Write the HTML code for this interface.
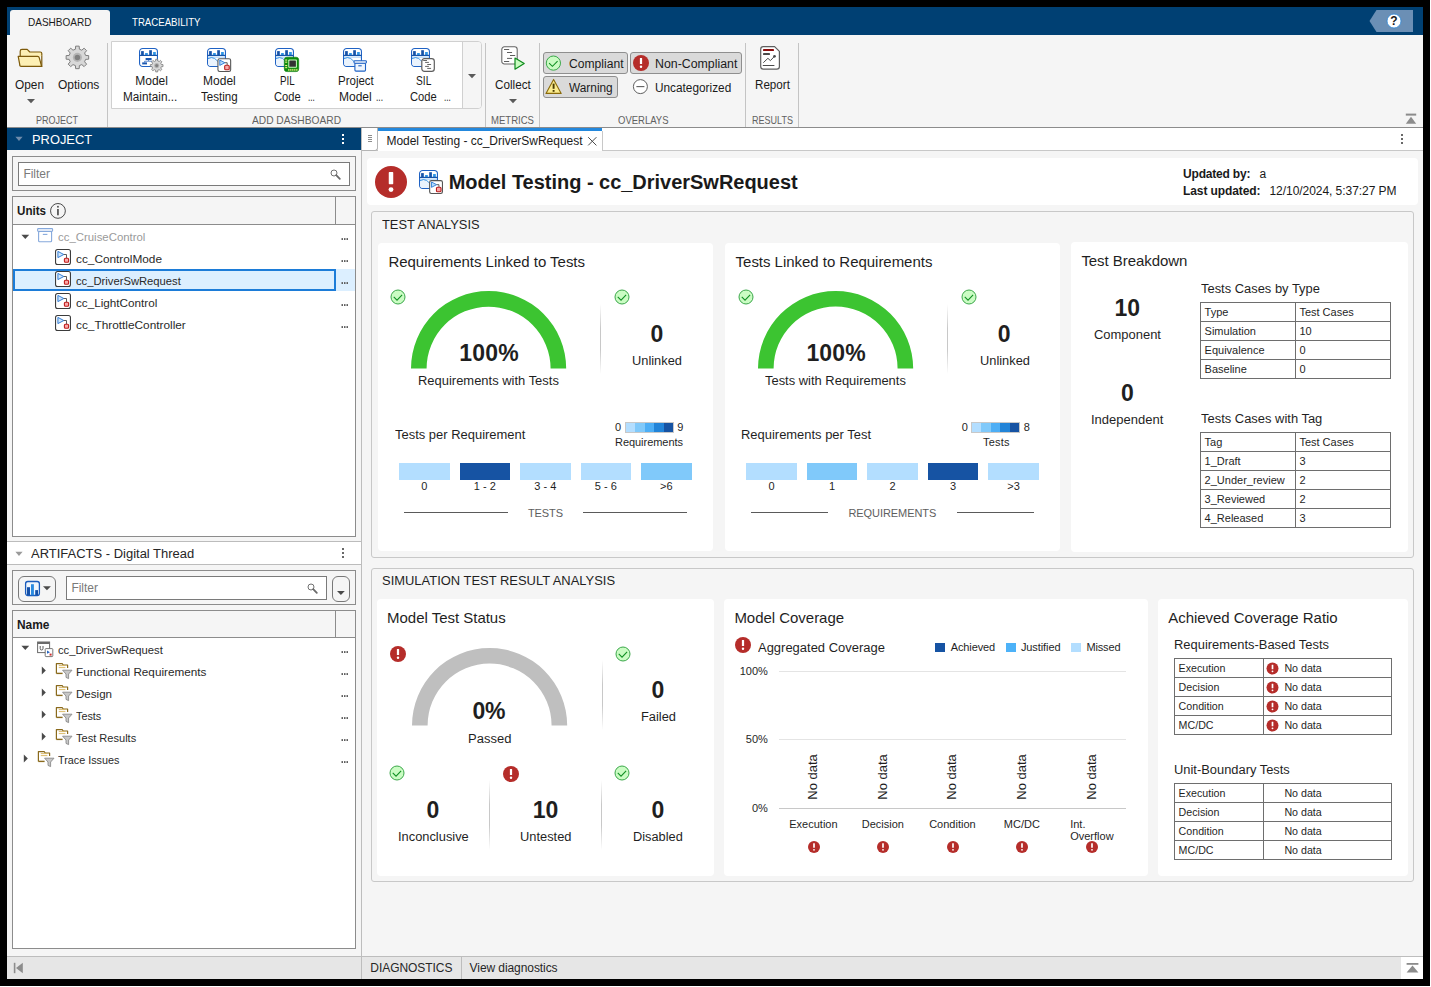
<!DOCTYPE html>
<html><head><meta charset="utf-8"><title>Model Testing Dashboard</title>
<style>
html,body{margin:0;padding:0;background:#fff;}
body{width:1431px;height:987px;position:relative;overflow:hidden;font-family:"Liberation Sans",sans-serif;}
#r div,#r svg{position:absolute;}
#r{position:absolute;left:0;top:0;width:1431px;height:987px;}
</style></head><body><div id="r">
<div style="left:0px;top:0px;width:1430px;height:986px;background:#000;"></div>
<div style="left:7px;top:7px;width:1416px;height:972px;background:#f5f5f5;"></div>
<div style="left:7px;top:7px;width:1416px;height:28px;background:#004073;"></div>
<div style="left:10px;top:10px;width:100px;height:26px;background:#f5f5f5;border-radius:3px 3px 0 0;"></div>
<div style="left:28.00px;top:14.00px;height:16px;line-height:16px;font-size:11px;color:#1a1a1a;white-space:nowrap;width:69.68px;transform:scaleX(0.9113);transform-origin:0 50%;">DASHBOARD</div>
<div style="left:132.00px;top:14.00px;height:16px;line-height:16px;font-size:11px;color:#fff;white-space:nowrap;width:78.24px;transform:scaleX(0.8755);transform-origin:0 50%;">TRACEABILITY</div>
<svg style="left:1368px;top:9px;" width="48" height="24" viewBox="0 0 48 24"><path d="M1.5 12 L8.5 1 H45 V23 H8.5 Z" fill="#6b8fb5"/><circle cx="26" cy="12" r="7" fill="#fff" stroke="#2a86d8" stroke-width="0.8"/></svg>
<div style="left:1390.33px;top:12.30px;height:18px;line-height:18px;font-size:12px;color:#1a1a1a;white-space:nowrap;font-weight:bold;">?</div>
<div style="left:7px;top:127px;width:1416px;height:1px;background:#8c8c8c;"></div>
<div style="left:107px;top:43px;width:1px;height:84px;background:#c4c4c4;"></div>
<div style="left:485px;top:43px;width:1px;height:84px;background:#c4c4c4;"></div>
<div style="left:539px;top:43px;width:1px;height:84px;background:#c4c4c4;"></div>
<div style="left:745px;top:43px;width:1px;height:84px;background:#c4c4c4;"></div>
<div style="left:798px;top:43px;width:1px;height:84px;background:#c4c4c4;"></div>
<div style="left:36.00px;top:112.00px;height:16px;line-height:16px;font-size:10.5px;color:#616161;white-space:nowrap;width:49.00px;transform:scaleX(0.8571);transform-origin:0 50%;">PROJECT</div>
<div style="left:252.00px;top:112.00px;height:16px;line-height:16px;font-size:10.5px;color:#616161;white-space:nowrap;width:91.60px;transform:scaleX(0.9716);transform-origin:0 50%;">ADD DASHBOARD</div>
<div style="left:491.00px;top:112.00px;height:16px;line-height:16px;font-size:10.5px;color:#616161;white-space:nowrap;width:47.25px;transform:scaleX(0.9100);transform-origin:0 50%;">METRICS</div>
<div style="left:617.50px;top:112.00px;height:16px;line-height:16px;font-size:10.5px;color:#616161;white-space:nowrap;width:55.83px;transform:scaleX(0.9046);transform-origin:0 50%;">OVERLAYS</div>
<div style="left:751.50px;top:112.00px;height:16px;line-height:16px;font-size:10.5px;color:#616161;white-space:nowrap;width:47.65px;transform:scaleX(0.8604);transform-origin:0 50%;">RESULTS</div>
<svg style="left:1405px;top:113px;" width="12" height="12" viewBox="0 0 12 12"><rect x="0.8" y="0.6" width="10.4" height="2" fill="#8c8c8c"/><path d="M6 3.8 L11.2 10.8 H0.8 Z" fill="#8c8c8c"/></svg>
<svg style="left:17px;top:47px;" width="27" height="21" viewBox="0 0 27 21"><path d="M3.2 19.2 V4.2 Q3.2 2.4 5 2.4 H10.2 L12.8 5 H23.2 Q24.8 5 24.8 6.6 V8.6" fill="#fdf0b4" stroke="#7d5a0a" stroke-width="1.2" stroke-linejoin="round"/>
<path d="M1.2 9.4 H20.6 Q22 9.4 22.3 10.8 L24.6 19.4 H4 Q3.1 19.4 2.9 18.4 Z" fill="#fdf0b4" stroke="#7d5a0a" stroke-width="1.2" stroke-linejoin="round"/>
<path d="M24.8 8.6 V19.4 H24.6" fill="none" stroke="#7d5a0a" stroke-width="1.2"/></svg>
<div style="left:15.00px;top:75.70px;height:18px;line-height:18px;font-size:12px;color:#1a1a1a;white-space:nowrap;width:29.36px;transform:scaleX(0.9879);transform-origin:0 50%;">Open</div>
<svg style="left:26px;top:98px;" width="10" height="6" viewBox="0 0 10 6"><path d="M1 1 H9 L5 5.2 Z" fill="#5a5a5a"/></svg>
<svg style="left:64px;top:45px;" width="27" height="26" viewBox="0 0 27 26"><path d="M11.62 1.14 L15.18 1.14 L15.37 4.20 L17.81 5.21 L20.10 3.18 L22.62 5.70 L20.59 7.99 L21.60 10.43 L24.66 10.62 L24.66 14.18 L21.60 14.37 L20.59 16.81 L22.62 19.10 L20.10 21.62 L17.81 19.59 L15.37 20.60 L15.18 23.66 L11.62 23.66 L11.43 20.60 L8.99 19.59 L6.70 21.62 L4.18 19.10 L6.21 16.81 L5.20 14.37 L2.14 14.18 L2.14 10.62 L5.20 10.43 L6.21 7.99 L4.18 5.70 L6.70 3.18 L8.99 5.21 L11.43 4.20 Z" fill="#d8d8d8" stroke="#7e7e7e" stroke-width="1.0" stroke-linejoin="round"/><circle cx="13.4" cy="12.4" r="4.56" fill="#b4b4b4"/><circle cx="13.4" cy="12.4" r="2.74" fill="#808080"/></svg>
<div style="left:57.70px;top:75.70px;height:18px;line-height:18px;font-size:12px;color:#1a1a1a;white-space:nowrap;width:41.36px;transform:scaleX(0.9987);transform-origin:0 50%;">Options</div>
<div style="left:111px;top:41px;width:371px;height:68px;background:#fff;border:1px solid #d0d0d0;border-radius:0 4px 4px 0;box-sizing:border-box;"></div>
<div style="left:462px;top:42px;width:1px;height:66px;background:#d0d0d0;"></div>
<div style="left:463px;top:42px;width:18px;height:66px;background:#f5f5f5;border-radius:0 3px 3px 0;"></div>
<svg style="left:467px;top:73px;" width="10" height="6" viewBox="0 0 10 6"><path d="M1 1 H9 L5 5.2 Z" fill="#5a5a5a"/></svg>
<svg style="left:138px;top:47px;" width="27" height="27" viewBox="-1 -1 27 27"><rect x="0.55" y="0.55" width="17.9" height="17.9" rx="3.2" fill="#fff" stroke="#1f62c4" stroke-width="1.1"/>
<rect x="2.1" y="3.1" width="2.7" height="4.2" fill="#1653a8"/><rect x="6.1" y="5" width="2.7" height="2.3" fill="#2f96e6"/><rect x="10.2" y="2.2" width="2.7" height="5.1" fill="#1653a8"/><rect x="14.1" y="4" width="2.7" height="3.3" fill="#2f96e6"/>
<path d="M0.6 7.4 H18.4" stroke="#1653a8" stroke-width="1.2"/><rect x="6.6" y="10" width="6" height="2" fill="#1b57b0"/><rect x="3.2" y="14.4" width="4.8" height="2" fill="#1b57b0"/><path d="M9.6 12 V13.2 H5.6 V14.4 M9.6 13.2 H13 V14.4" fill="none" stroke="#2866c0" stroke-width="0.8"/><path d="M16.70 11.28 L18.70 11.28 L18.81 12.99 L20.17 13.56 L21.46 12.42 L22.88 13.84 L21.74 15.13 L22.31 16.49 L24.02 16.60 L24.02 18.60 L22.31 18.71 L21.74 20.07 L22.88 21.36 L21.46 22.78 L20.17 21.64 L18.81 22.21 L18.70 23.92 L16.70 23.92 L16.59 22.21 L15.23 21.64 L13.94 22.78 L12.52 21.36 L13.66 20.07 L13.09 18.71 L11.38 18.60 L11.38 16.60 L13.09 16.49 L13.66 15.13 L12.52 13.84 L13.94 12.42 L15.23 13.56 L16.59 12.99 Z" fill="#d8d8d8" stroke="#7e7e7e" stroke-width="0.8" stroke-linejoin="round"/><circle cx="17.7" cy="17.6" r="2.56" fill="#b4b4b4"/><circle cx="17.7" cy="17.6" r="1.54" fill="#808080"/></svg>
<div style="left:135.26px;top:72.00px;height:18px;line-height:18px;font-size:12px;color:#1a1a1a;white-space:nowrap;">Model</div>
<div style="left:123.00px;top:88.00px;height:18px;line-height:18px;font-size:12px;color:#1a1a1a;white-space:nowrap;width:55.36px;transform:scaleX(0.9809);transform-origin:0 50%;">Maintain...</div>
<svg style="left:206px;top:47px;" width="28" height="27" viewBox="-1 -1 28 27"><rect x="0.55" y="0.55" width="17.9" height="17.9" rx="3.2" fill="#fff" stroke="#1f62c4" stroke-width="1.1"/><path d="M1.1 10.6 Q4.6 8.6 7.8 10.6 L13 15.2 V17.9 H3.8 Q1.1 17.9 1.1 15.2 Z" fill="#eaf3fd"/><path d="M0.8 9.1 H18.2" stroke="#5aa2ea" stroke-width="0.6"/><path d="M1 10.7 Q4.6 8.5 7.7 10.5 L12.6 14.9" fill="none" stroke="#2f8fe2" stroke-width="0.9"/>
<rect x="2.1" y="3.1" width="2.7" height="4.2" fill="#1653a8"/><rect x="6.1" y="5" width="2.7" height="2.3" fill="#2f96e6"/><rect x="10.2" y="2.2" width="2.7" height="5.1" fill="#1653a8"/><rect x="14.1" y="4" width="2.7" height="3.3" fill="#2f96e6"/>
<path d="M0.6 7.4 H18.4" stroke="#1653a8" stroke-width="1.2"/><g transform="translate(10.4,10.2) scale(0.9857142857142858)"><rect x="0.55" y="0.55" width="12.9" height="12.9" rx="1.7" fill="#fff" stroke="#555" stroke-width="1.1"/>
<path d="M2.4 1.9 L7.6 4.6 L2.4 7.3 Z" fill="#b4dafa" stroke="#2a78d4" stroke-width="0.9" stroke-linejoin="round"/>
<path d="M7.6 4.6 H9.9 V7" fill="none" stroke="#4a4a4a" stroke-width="0.9"/>
<rect x="7.4" y="7.2" width="4.6" height="4.6" rx="1.1" fill="#f8a8a8" stroke="#b81c1c" stroke-width="1.1"/></g></svg>
<div style="left:203.06px;top:72.00px;height:18px;line-height:18px;font-size:12px;color:#1a1a1a;white-space:nowrap;">Model</div>
<div style="left:200.80px;top:88.00px;height:18px;line-height:18px;font-size:12px;color:#1a1a1a;white-space:nowrap;width:38.02px;transform:scaleX(0.9626);transform-origin:0 50%;">Testing</div>
<svg style="left:274px;top:47px;" width="28" height="27" viewBox="-1 -1 28 27"><rect x="0.55" y="0.55" width="17.9" height="17.9" rx="3.2" fill="#fff" stroke="#1f62c4" stroke-width="1.1"/><path d="M1.1 10.6 Q4.6 8.6 7.8 10.6 L13 15.2 V17.9 H3.8 Q1.1 17.9 1.1 15.2 Z" fill="#eaf3fd"/><path d="M0.8 9.1 H18.2" stroke="#5aa2ea" stroke-width="0.6"/><path d="M1 10.7 Q4.6 8.5 7.7 10.5 L12.6 14.9" fill="none" stroke="#2f8fe2" stroke-width="0.9"/>
<rect x="2.1" y="3.1" width="2.7" height="4.2" fill="#1653a8"/><rect x="6.1" y="5" width="2.7" height="2.3" fill="#2f96e6"/><rect x="10.2" y="2.2" width="2.7" height="5.1" fill="#1653a8"/><rect x="14.1" y="4" width="2.7" height="3.3" fill="#2f96e6"/>
<path d="M0.6 7.4 H18.4" stroke="#1653a8" stroke-width="1.2"/><g transform="translate(9,8.9)"><rect x="0.3" y="0.3" width="14.4" height="14.4" rx="2.6" fill="#0c8c0c" stroke="#0a7a0a" stroke-width="0.6"/><rect x="4.3" y="2.6" width="8.6" height="8.3" rx="0.8" fill="#c8fcc0"/><rect x="5.3" y="3.6" width="6.6" height="6.3" rx="0.4" fill="#333"/>
<g fill="#f4f08a"><rect x="1.2" y="2.6" width="2" height="1.1"/><rect x="1.2" y="4.7" width="2" height="1.1"/><rect x="1.2" y="8.1" width="2" height="1.1"/><rect x="1.2" y="10.2" width="2" height="1.1"/>
<rect x="4.3" y="12" width="1.1" height="1.9"/><rect x="6.3" y="12" width="1.1" height="1.9"/><rect x="8.3" y="12" width="1.1" height="1.9"/><rect x="10.3" y="12" width="1.1" height="1.9"/><rect x="12.3" y="12" width="1.1" height="1.9"/></g></g></svg>
<div style="left:280.00px;top:72.00px;height:18px;line-height:18px;font-size:12px;color:#1a1a1a;white-space:nowrap;width:18.01px;transform:scaleX(0.8161);transform-origin:0 50%;">PIL</div>
<div style="left:273.70px;top:88.00px;height:18px;line-height:18px;font-size:12px;color:#1a1a1a;white-space:nowrap;width:28.69px;transform:scaleX(0.9272);transform-origin:0 50%;">Code</div>
<div style="left:308.00px;top:88.00px;height:18px;line-height:18px;font-size:12px;color:#1a1a1a;white-space:nowrap;width:10.00px;transform:scaleX(0.6799);transform-origin:0 50%;">...</div>
<svg style="left:342px;top:47px;" width="28" height="27" viewBox="-1 -1 28 27"><rect x="0.55" y="0.55" width="17.9" height="17.9" rx="3.2" fill="#fff" stroke="#1f62c4" stroke-width="1.1"/><path d="M1.1 10.6 Q4.6 8.6 7.8 10.6 L13 15.2 V17.9 H3.8 Q1.1 17.9 1.1 15.2 Z" fill="#eaf3fd"/><path d="M0.8 9.1 H18.2" stroke="#5aa2ea" stroke-width="0.6"/><path d="M1 10.7 Q4.6 8.5 7.7 10.5 L12.6 14.9" fill="none" stroke="#2f8fe2" stroke-width="0.9"/>
<rect x="2.1" y="3.1" width="2.7" height="4.2" fill="#1653a8"/><rect x="6.1" y="5" width="2.7" height="2.3" fill="#2f96e6"/><rect x="10.2" y="2.2" width="2.7" height="5.1" fill="#1653a8"/><rect x="14.1" y="4" width="2.7" height="3.3" fill="#2f96e6"/>
<path d="M0.6 7.4 H18.4" stroke="#1653a8" stroke-width="1.2"/><g transform="translate(10.5,12.2)"><rect x="1.4" y="2.8" width="10.6" height="8.1" rx="1" fill="#f0f6fd" stroke="#1f62c4" stroke-width="1.1"/><rect x="0.5" y="0.5" width="12.4" height="2.5" rx="0.9" fill="#f0f6fd" stroke="#1f62c4" stroke-width="1.1"/><path d="M4.8 5.6 H8.2" stroke="#1f62c4" stroke-width="1.1"/></g></svg>
<div style="left:337.70px;top:72.00px;height:18px;line-height:18px;font-size:12px;color:#1a1a1a;white-space:nowrap;width:37.35px;transform:scaleX(0.9586);transform-origin:0 50%;">Project</div>
<div style="left:338.80px;top:88.00px;height:18px;line-height:18px;font-size:12px;color:#1a1a1a;white-space:nowrap;width:32.68px;transform:scaleX(1.0005);transform-origin:0 50%;">Model</div>
<div style="left:376.00px;top:88.00px;height:18px;line-height:18px;font-size:12px;color:#1a1a1a;white-space:nowrap;width:10.00px;transform:scaleX(0.6999);transform-origin:0 50%;">...</div>
<svg style="left:410px;top:47px;" width="28" height="27" viewBox="-1 -1 28 27"><rect x="0.55" y="0.55" width="17.9" height="17.9" rx="3.2" fill="#fff" stroke="#1f62c4" stroke-width="1.1"/><path d="M1.1 10.6 Q4.6 8.6 7.8 10.6 L13 15.2 V17.9 H3.8 Q1.1 17.9 1.1 15.2 Z" fill="#eaf3fd"/><path d="M0.8 9.1 H18.2" stroke="#5aa2ea" stroke-width="0.6"/><path d="M1 10.7 Q4.6 8.5 7.7 10.5 L12.6 14.9" fill="none" stroke="#2f8fe2" stroke-width="0.9"/>
<rect x="2.1" y="3.1" width="2.7" height="4.2" fill="#1653a8"/><rect x="6.1" y="5" width="2.7" height="2.3" fill="#2f96e6"/><rect x="10.2" y="2.2" width="2.7" height="5.1" fill="#1653a8"/><rect x="14.1" y="4" width="2.7" height="3.3" fill="#2f96e6"/>
<path d="M0.6 7.4 H18.4" stroke="#1653a8" stroke-width="1.2"/><g transform="translate(10.2,10)"><rect x="0.6" y="0.6" width="12.5" height="12.8" rx="2.6" fill="#fff" stroke="#5e5e5e" stroke-width="1.2"/><path d="M2.4 2.5 H5.4 M4.3 4.4 H7.3 M6.4 6.5 H9.5 M4.3 8.4 H7.3 M6.4 10.4 H9.5" stroke="#5e5e5e" stroke-width="0.95" stroke-linecap="round"/></g></svg>
<div style="left:415.70px;top:72.00px;height:18px;line-height:18px;font-size:12px;color:#1a1a1a;white-space:nowrap;width:18.01px;transform:scaleX(0.8494);transform-origin:0 50%;">SIL</div>
<div style="left:409.70px;top:88.00px;height:18px;line-height:18px;font-size:12px;color:#1a1a1a;white-space:nowrap;width:28.69px;transform:scaleX(0.9307);transform-origin:0 50%;">Code</div>
<div style="left:444.20px;top:88.00px;height:18px;line-height:18px;font-size:12px;color:#1a1a1a;white-space:nowrap;width:10.00px;transform:scaleX(0.6799);transform-origin:0 50%;">...</div>
<svg style="left:500px;top:45px;" width="26" height="26" viewBox="0 0 26 26"><rect x="1.8" y="1.8" width="15.4" height="17.2" rx="2.6" fill="#fff" stroke="#646464" stroke-width="1.05"/><path d="M4.4 4.5 H8.8 M7.4 7.5 H11.7 M10.4 10.5 H14.8 M7.4 13.4 H11.7 M4.4 16.5 H8.8" stroke="#5e5e5e" stroke-width="1" stroke-linecap="round"/>
<path d="M15 13 L24.2 18.5 L15 24.2 Z" fill="#c8fcc0" stroke="#0d8a1c" stroke-width="1.2" stroke-linejoin="round"/></svg>
<div style="left:494.60px;top:75.70px;height:18px;line-height:18px;font-size:12px;color:#1a1a1a;white-space:nowrap;width:36.68px;transform:scaleX(0.9760);transform-origin:0 50%;">Collect</div>
<svg style="left:508px;top:98px;" width="10" height="6" viewBox="0 0 10 6"><path d="M1 1 H9 L5 5.2 Z" fill="#5a5a5a"/></svg>
<div style="left:543px;top:52px;width:85px;height:22px;background:#dadada;border:1px solid #8f8f8f;border-radius:3px;box-sizing:border-box;"></div>
<div style="left:630px;top:52px;width:112px;height:22px;background:#dadada;border:1px solid #8f8f8f;border-radius:3px;box-sizing:border-box;"></div>
<div style="left:543px;top:76px;width:75px;height:22px;background:#dadada;border:1px solid #8f8f8f;border-radius:3px;box-sizing:border-box;"></div>
<svg style="left:545px;top:55px;" width="17" height="17" viewBox="0 0 17 17"><circle cx="8.4" cy="8.1" r="7.1" fill="#cafcc3" stroke="#3ba84a" stroke-width="1"/><path d="M4.07 8.02 L7.41 11.37 L12.58 6.05" fill="none" stroke="#0f8f22" stroke-width="1.05"/></svg>
<div style="left:568.60px;top:54.50px;height:18px;line-height:18px;font-size:12px;color:#1a1a1a;white-space:nowrap;width:54.02px;transform:scaleX(1.0088);transform-origin:0 50%;">Compliant</div>
<svg style="left:632px;top:54px;" width="18" height="18" viewBox="0 0 18 18"><circle cx="9" cy="9" r="8" fill="#b52d2a"/><rect x="7.88" y="4.00" width="2.24" height="6.12" rx="0.32" fill="#fff"/><circle cx="9" cy="12.80" r="1.22" fill="#fff"/></svg>
<div style="left:655.40px;top:54.50px;height:18px;line-height:18px;font-size:12px;color:#1a1a1a;white-space:nowrap;width:80.03px;transform:scaleX(1.0296);transform-origin:0 50%;">Non-Compliant</div>
<svg style="left:545px;top:78px;" width="18" height="17" viewBox="0 0 18 17"><path d="M8.6 1.4 L16.2 15.4 H1 Z" fill="#fbec8e" stroke="#8a6a0a" stroke-width="1.1" stroke-linejoin="round"/><rect x="7.65" y="5.6" width="1.9" height="5.2" fill="#4a3a00"/><rect x="7.65" y="12" width="1.9" height="1.8" fill="#4a3a00"/></svg>
<div style="left:569.00px;top:79.20px;height:18px;line-height:18px;font-size:12px;color:#1a1a1a;white-space:nowrap;width:44.24px;transform:scaleX(0.9878);transform-origin:0 50%;">Warning</div>
<svg style="left:632px;top:78px;" width="17" height="17" viewBox="0 0 17 17"><circle cx="8.4" cy="8.6" r="7" fill="#fff" stroke="#5e5e5e" stroke-width="1"/><path d="M4.4 8.6 H12.4" stroke="#5e5e5e" stroke-width="1.1"/></svg>
<div style="left:655.40px;top:79.20px;height:18px;line-height:18px;font-size:12px;color:#1a1a1a;white-space:nowrap;width:77.38px;transform:scaleX(0.9848);transform-origin:0 50%;">Uncategorized</div>
<svg style="left:759px;top:45px;" width="24" height="26" viewBox="0 0 24 26"><path d="M1.7 4.2 Q1.7 1.6 4.3 1.6 H15.6 L20.4 6.4 V21.6 Q20.4 24.2 17.8 24.2 H4.3 Q1.7 24.2 1.7 21.6 Z" fill="#fff" stroke="#5e5e5e" stroke-width="1.2" stroke-linejoin="round"/>
<rect x="4" y="4" width="11" height="2" rx="0.4" fill="#8a0c0c"/><rect x="4" y="8.1" width="7" height="1.9" rx="0.4" fill="#4a4a4a"/><path d="M4.2 20.5 H15" stroke="#4a4a4a" stroke-width="1" stroke-linecap="round"/>
<path d="M4.3 17.7 L8.9 13.3 L11.4 15.6 L15.4 11.4" fill="none" stroke="#4a4a4a" stroke-width="1"/><circle cx="15.5" cy="11.3" r="1.35" fill="#4a4a4a"/></svg>
<div style="left:754.80px;top:75.70px;height:18px;line-height:18px;font-size:12px;color:#1a1a1a;white-space:nowrap;width:36.02px;transform:scaleX(0.9690);transform-origin:0 50%;">Report</div>
<div style="left:7px;top:128px;width:354px;height:829px;background:#f5f5f5;"></div>
<div style="left:361px;top:128px;width:1px;height:851px;background:#bdbdbd;"></div>
<div style="left:7px;top:128px;width:354px;height:22px;background:#004073;"></div>
<svg style="left:15px;top:136px;" width="8" height="6" viewBox="0 0 8 6"><path d="M0.4 0.8 H7.6 L4 5 Z" fill="#6f8cab"/></svg>
<div style="left:31.50px;top:129.50px;height:20px;line-height:20px;font-size:13.6px;color:#fff;white-space:nowrap;width:63.47px;transform:scaleX(0.9469);transform-origin:0 50%;">PROJECT</div>
<svg style="left:342px;top:134px;" width="2" height="10" viewBox="0 0 2 10"><rect x="0" y="0" width="2" height="2" fill="#fff"/><rect x="0" y="4" width="2" height="2" fill="#fff"/><rect x="0" y="8" width="2" height="2" fill="#fff"/></svg>
<div style="left:12px;top:156px;width:344px;height:35px;background:#f5f5f5;border:1px solid #8c8c8c;box-sizing:border-box;"></div>
<div style="left:18px;top:162px;width:332px;height:24px;background:#fff;border:1px solid #7a7a7a;box-sizing:border-box;"></div>
<div style="left:23.40px;top:164.80px;height:18px;line-height:18px;font-size:12px;color:#7a7a7a;white-space:nowrap;letter-spacing:-0.013px;">Filter</div>
<svg style="left:329.5px;top:168.5px;" width="11" height="11" viewBox="0 0 11 11"><circle cx="4" cy="4" r="3" fill="#fff" stroke="#707070" stroke-width="1"/><path d="M6.2 6.2 L9.8 9.8" stroke="#6a6a6a" stroke-width="1.8" stroke-linecap="round"/></svg>
<div style="left:12px;top:196px;width:344px;height:341px;background:#fff;border:1px solid #8c8c8c;box-sizing:border-box;"></div>
<div style="left:13px;top:197px;width:342px;height:27px;background:#f5f5f5;"></div>
<div style="left:13px;top:224px;width:342px;height:1px;background:#8c8c8c;"></div>
<div style="left:335px;top:197px;width:1px;height:27px;background:#8c8c8c;"></div>
<div style="left:16.50px;top:201.80px;height:18px;line-height:18px;font-size:12px;color:#1a1a1a;white-space:nowrap;font-weight:bold;width:30.00px;transform:scaleX(0.9667);transform-origin:0 50%;">Units</div>
<svg style="left:49px;top:202px;" width="18" height="18" viewBox="0 0 18 18"><circle cx="8.95" cy="8.9" r="7.4" fill="none" stroke="#4a4a4a" stroke-width="1"/><rect x="8.2" y="7" width="1.5" height="6.3" fill="#3a3a3a"/><rect x="8.2" y="3.9" width="1.5" height="1.7" fill="#3a3a3a"/></svg>
<div style="left:336px;top:269px;width:19px;height:22px;background:#dcefff;"></div>
<div style="left:13px;top:269px;width:323px;height:22px;background:#dcefff;border:2px solid #1c7cd8;box-sizing:border-box;"></div>
<svg style="left:21px;top:233.6px;" width="9" height="6" viewBox="0 0 9 6"><path d="M0.4 0.8 H8.2 L4.3 5 Z" fill="#4a4a4a"/></svg>
<svg style="left:36.5px;top:228px;" width="17" height="15" viewBox="0 0 17 15"><rect x="1.6" y="3.4" width="13" height="10.4" rx="1" fill="#fff" stroke="#86a9dc" stroke-width="1.1"/><rect x="0.6" y="0.6" width="15" height="2.8" rx="0.8" fill="#fff" stroke="#86a9dc" stroke-width="1.1"/><path d="M5.8 6.4 H10.4" stroke="#86a9dc" stroke-width="1.1"/></svg>
<div style="left:58.40px;top:228.80px;height:17px;line-height:17px;font-size:11.5px;color:#9a9a9a;white-space:nowrap;width:88.20px;transform:scaleX(0.9909);transform-origin:0 50%;">cc_CruiseControl</div>
<svg style="left:55px;top:249.2px;" width="16" height="16" viewBox="0 0 16 16"><rect x="0.55" y="0.55" width="14.9" height="14.9" rx="2" fill="#fff" stroke="#3c3c3c" stroke-width="1.1"/>
<path d="M2.9 2.4 L8.8 5.5 L2.9 8.6 Z" fill="#cfe6fb" stroke="#2a78d4" stroke-width="0.95" stroke-linejoin="round"/>
<path d="M8.8 5.5 H11.5 V9" fill="none" stroke="#4a4a4a" stroke-width="0.9"/>
<rect x="9.4" y="9.2" width="4.2" height="4" rx="1" fill="#f8a8a8" stroke="#c01c1c" stroke-width="1.1"/></svg>
<div style="left:76.20px;top:250.80px;height:17px;line-height:17px;font-size:11.5px;color:#2a2a2a;white-space:nowrap;width:83.73px;transform:scaleX(1.0271);transform-origin:0 50%;">cc_ControlMode</div>
<svg style="left:55px;top:271.09999999999997px;" width="16" height="16" viewBox="0 0 16 16"><rect x="0.55" y="0.55" width="14.9" height="14.9" rx="2" fill="#fff" stroke="#3c3c3c" stroke-width="1.1"/>
<path d="M2.9 2.4 L8.8 5.5 L2.9 8.6 Z" fill="#cfe6fb" stroke="#2a78d4" stroke-width="0.95" stroke-linejoin="round"/>
<path d="M8.8 5.5 H11.5 V9" fill="none" stroke="#4a4a4a" stroke-width="0.9"/>
<rect x="9.4" y="9.2" width="4.2" height="4" rx="1" fill="#f8a8a8" stroke="#c01c1c" stroke-width="1.1"/></svg>
<div style="left:76.20px;top:272.70px;height:17px;line-height:17px;font-size:11.5px;color:#2a2a2a;white-space:nowrap;width:107.37px;transform:scaleX(0.9761);transform-origin:0 50%;">cc_DriverSwRequest</div>
<svg style="left:55px;top:293.2px;" width="16" height="16" viewBox="0 0 16 16"><rect x="0.55" y="0.55" width="14.9" height="14.9" rx="2" fill="#fff" stroke="#3c3c3c" stroke-width="1.1"/>
<path d="M2.9 2.4 L8.8 5.5 L2.9 8.6 Z" fill="#cfe6fb" stroke="#2a78d4" stroke-width="0.95" stroke-linejoin="round"/>
<path d="M8.8 5.5 H11.5 V9" fill="none" stroke="#4a4a4a" stroke-width="0.9"/>
<rect x="9.4" y="9.2" width="4.2" height="4" rx="1" fill="#f8a8a8" stroke="#c01c1c" stroke-width="1.1"/></svg>
<div style="left:76.20px;top:294.80px;height:17px;line-height:17px;font-size:11.5px;color:#2a2a2a;white-space:nowrap;width:79.91px;transform:scaleX(1.0175);transform-origin:0 50%;">cc_LightControl</div>
<svg style="left:55px;top:315.09999999999997px;" width="16" height="16" viewBox="0 0 16 16"><rect x="0.55" y="0.55" width="14.9" height="14.9" rx="2" fill="#fff" stroke="#3c3c3c" stroke-width="1.1"/>
<path d="M2.9 2.4 L8.8 5.5 L2.9 8.6 Z" fill="#cfe6fb" stroke="#2a78d4" stroke-width="0.95" stroke-linejoin="round"/>
<path d="M8.8 5.5 H11.5 V9" fill="none" stroke="#4a4a4a" stroke-width="0.9"/>
<rect x="9.4" y="9.2" width="4.2" height="4" rx="1" fill="#f8a8a8" stroke="#c01c1c" stroke-width="1.1"/></svg>
<div style="left:76.20px;top:316.70px;height:17px;line-height:17px;font-size:11.5px;color:#2a2a2a;white-space:nowrap;width:106.74px;transform:scaleX(1.0287);transform-origin:0 50%;">cc_ThrottleController</div>
<svg style="left:341px;top:238px;" width="8" height="3" viewBox="0 0 8 3"><rect x="0.5" y="0.1" width="1.5" height="1.9" fill="#5c5c5c"/><rect x="3" y="0.1" width="1.5" height="1.9" fill="#5c5c5c"/><rect x="5.5" y="0.1" width="1.5" height="1.9" fill="#5c5c5c"/></svg>
<svg style="left:341px;top:260px;" width="8" height="3" viewBox="0 0 8 3"><rect x="0.5" y="0.1" width="1.5" height="1.9" fill="#5c5c5c"/><rect x="3" y="0.1" width="1.5" height="1.9" fill="#5c5c5c"/><rect x="5.5" y="0.1" width="1.5" height="1.9" fill="#5c5c5c"/></svg>
<svg style="left:341px;top:282px;" width="8" height="3" viewBox="0 0 8 3"><rect x="0.5" y="0.1" width="1.5" height="1.9" fill="#5c5c5c"/><rect x="3" y="0.1" width="1.5" height="1.9" fill="#5c5c5c"/><rect x="5.5" y="0.1" width="1.5" height="1.9" fill="#5c5c5c"/></svg>
<svg style="left:341px;top:304px;" width="8" height="3" viewBox="0 0 8 3"><rect x="0.5" y="0.1" width="1.5" height="1.9" fill="#5c5c5c"/><rect x="3" y="0.1" width="1.5" height="1.9" fill="#5c5c5c"/><rect x="5.5" y="0.1" width="1.5" height="1.9" fill="#5c5c5c"/></svg>
<svg style="left:341px;top:326px;" width="8" height="3" viewBox="0 0 8 3"><rect x="0.5" y="0.1" width="1.5" height="1.9" fill="#5c5c5c"/><rect x="3" y="0.1" width="1.5" height="1.9" fill="#5c5c5c"/><rect x="5.5" y="0.1" width="1.5" height="1.9" fill="#5c5c5c"/></svg>
<div style="left:7px;top:541px;width:354px;height:24px;background:#fff;border-top:1px solid #bcbcbc;border-bottom:1px solid #bcbcbc;box-sizing:border-box;"></div>
<svg style="left:15px;top:550.5px;" width="8" height="6" viewBox="0 0 8 6"><path d="M0.4 0.8 H7.6 L4 5 Z" fill="#9a9a9a"/></svg>
<div style="left:31.00px;top:542.70px;height:21px;line-height:21px;font-size:13.7px;color:#262626;white-space:nowrap;width:172.32px;transform:scaleX(0.9482);transform-origin:0 50%;">ARTIFACTS - Digital Thread</div>
<svg style="left:342px;top:548px;" width="2" height="10" viewBox="0 0 2 10"><rect x="0" y="0" width="2" height="2" fill="#686868"/><rect x="0" y="4" width="2" height="2" fill="#686868"/><rect x="0" y="8" width="2" height="2" fill="#686868"/></svg>
<div style="left:12px;top:570px;width:344px;height:35px;background:#f5f5f5;border:1px solid #8c8c8c;box-sizing:border-box;"></div>
<div style="left:18px;top:576px;width:38px;height:26px;background:#f5f5f5;border:1px solid #787878;border-radius:6px;box-sizing:border-box;"></div>
<svg style="left:24px;top:580px;" width="17" height="17" viewBox="0 0 17 17"><rect x="1.6" y="1.5" width="13.8" height="14" rx="2.2" fill="#f0f6fd" stroke="#1a5cbc" stroke-width="1.3"/><rect x="3" y="7.2" width="3" height="8" fill="#1450a8"/><rect x="7" y="4.2" width="2.9" height="11" fill="#2a8ae0"/><rect x="11.2" y="10.1" width="2.8" height="5" fill="#1450a8"/></svg>
<svg style="left:43px;top:586px;" width="8" height="5" viewBox="0 0 8 5"><path d="M0 0.2 H7.9 L3.95 4.2 Z" fill="#4a4a4a"/></svg>
<div style="left:66px;top:576px;width:261px;height:24px;background:#fff;border:1px solid #7a7a7a;box-sizing:border-box;"></div>
<div style="left:71.40px;top:578.80px;height:18px;line-height:18px;font-size:12px;color:#7a7a7a;white-space:nowrap;letter-spacing:-0.013px;">Filter</div>
<svg style="left:306.5px;top:582.5px;" width="11" height="11" viewBox="0 0 11 11"><circle cx="4" cy="4" r="3" fill="#fff" stroke="#707070" stroke-width="1"/><path d="M6.2 6.2 L9.8 9.8" stroke="#6a6a6a" stroke-width="1.8" stroke-linecap="round"/></svg>
<div style="left:332px;top:576px;width:18px;height:26px;background:#f5f5f5;border:1px solid #787878;border-radius:6px;box-sizing:border-box;"></div>
<svg style="left:337px;top:591px;" width="8" height="5" viewBox="0 0 8 5"><path d="M0 0 H7.8 L3.9 3.9 Z" fill="#4a4a4a"/></svg>
<div style="left:12px;top:610px;width:344px;height:339px;background:#fff;border:1px solid #8c8c8c;box-sizing:border-box;"></div>
<div style="left:13px;top:611px;width:342px;height:26px;background:#f5f5f5;"></div>
<div style="left:13px;top:637px;width:342px;height:1px;background:#8c8c8c;"></div>
<div style="left:335px;top:611px;width:1px;height:26px;background:#8c8c8c;"></div>
<div style="left:16.50px;top:615.80px;height:18px;line-height:18px;font-size:12px;color:#1a1a1a;white-space:nowrap;font-weight:bold;width:32.68px;transform:scaleX(0.9944);transform-origin:0 50%;">Name</div>
<svg style="left:21.4px;top:645.4px;" width="9" height="6" viewBox="0 0 9 6"><path d="M0.4 0.8 H8.2 L4.3 5 Z" fill="#4a4a4a"/></svg>
<svg style="left:37px;top:641px;" width="17" height="17" viewBox="0 0 17 17"><rect x="0.6" y="1" width="12" height="10.6" fill="#fff" stroke="#6a6a6a" stroke-width="1"/><rect x="0.6" y="1" width="12" height="2" fill="#6a6a6a"/><path d="M3.2 5 V7.6 Q3.2 9 4.6 9 Q6 9 6 7.6 V5" fill="none" stroke="#4a4a4a" stroke-width="0.9"/>
<rect x="8.2" y="7.6" width="7.6" height="8" rx="0.8" fill="#fff" stroke="#6a6a6a" stroke-width="0.9"/><path d="M10 9.6 L13 11.2 L10 12.8 Z" fill="#2866c0"/><rect x="12.6" y="12.6" width="2" height="2" fill="#d03030"/></svg>
<div style="left:58.20px;top:641.50px;height:17px;line-height:17px;font-size:11.5px;color:#2a2a2a;white-space:nowrap;width:107.37px;transform:scaleX(0.9761);transform-origin:0 50%;">cc_DriverSwRequest</div>
<svg style="left:40.6px;top:665.9px;" width="6" height="9" viewBox="0 0 6 9"><path d="M0.8 0.4 V8.4 L4.8 4.4 Z" fill="#4a4a4a"/></svg>
<svg style="left:54.6px;top:661.8px;" width="18" height="18" viewBox="0 0 18 18"><path d="M1.4 11.4 V1.6 H7.2 L8.2 3 H12.6 V6" fill="#fff" stroke="#8a6a1c" stroke-width="1.2" stroke-linejoin="round"/><path d="M3.8 3.6 H10.4 M3.8 5.6 H10.4" stroke="#d8b45a" stroke-width="0.9"/><path d="M1.4 11.4 H7.6" stroke="#8a6a1c" stroke-width="1.4"/>
<path d="M7.6 8.2 H17 L13.6 12 V16.6 L11 15.4 V12 Z" fill="#c8c8c8" stroke="#8a8a8a" stroke-width="0.9" stroke-linejoin="round"/></svg>
<div style="left:76.30px;top:663.50px;height:17px;line-height:17px;font-size:11.5px;color:#2a2a2a;white-space:nowrap;width:127.84px;transform:scaleX(1.0200);transform-origin:0 50%;">Functional Requirements</div>
<svg style="left:40.6px;top:687.9px;" width="6" height="9" viewBox="0 0 6 9"><path d="M0.8 0.4 V8.4 L4.8 4.4 Z" fill="#4a4a4a"/></svg>
<svg style="left:54.6px;top:683.8px;" width="18" height="18" viewBox="0 0 18 18"><path d="M1.4 11.4 V1.6 H7.2 L8.2 3 H12.6 V6" fill="#fff" stroke="#8a6a1c" stroke-width="1.2" stroke-linejoin="round"/><path d="M3.8 3.6 H10.4 M3.8 5.6 H10.4" stroke="#d8b45a" stroke-width="0.9"/><path d="M1.4 11.4 H7.6" stroke="#8a6a1c" stroke-width="1.4"/>
<path d="M7.6 8.2 H17 L13.6 12 V16.6 L11 15.4 V12 Z" fill="#c8c8c8" stroke="#8a8a8a" stroke-width="0.9" stroke-linejoin="round"/></svg>
<div style="left:76.30px;top:685.50px;height:17px;line-height:17px;font-size:11.5px;color:#2a2a2a;white-space:nowrap;width:35.80px;transform:scaleX(1.0057);transform-origin:0 50%;">Design</div>
<svg style="left:40.6px;top:709.9px;" width="6" height="9" viewBox="0 0 6 9"><path d="M0.8 0.4 V8.4 L4.8 4.4 Z" fill="#4a4a4a"/></svg>
<svg style="left:54.6px;top:705.8px;" width="18" height="18" viewBox="0 0 18 18"><path d="M1.4 11.4 V1.6 H7.2 L8.2 3 H12.6 V6" fill="#fff" stroke="#8a6a1c" stroke-width="1.2" stroke-linejoin="round"/><path d="M3.8 3.6 H10.4 M3.8 5.6 H10.4" stroke="#d8b45a" stroke-width="0.9"/><path d="M1.4 11.4 H7.6" stroke="#8a6a1c" stroke-width="1.4"/>
<path d="M7.6 8.2 H17 L13.6 12 V16.6 L11 15.4 V12 Z" fill="#c8c8c8" stroke="#8a8a8a" stroke-width="0.9" stroke-linejoin="round"/></svg>
<div style="left:76.30px;top:707.50px;height:17px;line-height:17px;font-size:11.5px;color:#2a2a2a;white-space:nowrap;width:26.84px;transform:scaleX(0.9389);transform-origin:0 50%;">Tests</div>
<svg style="left:40.6px;top:731.9px;" width="6" height="9" viewBox="0 0 6 9"><path d="M0.8 0.4 V8.4 L4.8 4.4 Z" fill="#4a4a4a"/></svg>
<svg style="left:54.6px;top:727.8px;" width="18" height="18" viewBox="0 0 18 18"><path d="M1.4 11.4 V1.6 H7.2 L8.2 3 H12.6 V6" fill="#fff" stroke="#8a6a1c" stroke-width="1.2" stroke-linejoin="round"/><path d="M3.8 3.6 H10.4 M3.8 5.6 H10.4" stroke="#d8b45a" stroke-width="0.9"/><path d="M1.4 11.4 H7.6" stroke="#8a6a1c" stroke-width="1.4"/>
<path d="M7.6 8.2 H17 L13.6 12 V16.6 L11 15.4 V12 Z" fill="#c8c8c8" stroke="#8a8a8a" stroke-width="0.9" stroke-linejoin="round"/></svg>
<div style="left:76.30px;top:729.50px;height:17px;line-height:17px;font-size:11.5px;color:#2a2a2a;white-space:nowrap;width:62.63px;transform:scaleX(0.9612);transform-origin:0 50%;">Test Results</div>
<svg style="left:22.6px;top:753.9px;" width="6" height="9" viewBox="0 0 6 9"><path d="M0.8 0.4 V8.4 L4.8 4.4 Z" fill="#4a4a4a"/></svg>
<svg style="left:36.6px;top:749.8px;" width="18" height="18" viewBox="0 0 18 18"><path d="M1.4 11.4 V1.6 H7.2 L8.2 3 H12.6 V6" fill="#fff" stroke="#8a6a1c" stroke-width="1.2" stroke-linejoin="round"/><path d="M3.8 3.6 H10.4 M3.8 5.6 H10.4" stroke="#d8b45a" stroke-width="0.9"/><path d="M1.4 11.4 H7.6" stroke="#8a6a1c" stroke-width="1.4"/>
<path d="M7.6 8.2 H17 L13.6 12 V16.6 L11 15.4 V12 Z" fill="#c8c8c8" stroke="#8a8a8a" stroke-width="0.9" stroke-linejoin="round"/></svg>
<div style="left:58.40px;top:751.50px;height:17px;line-height:17px;font-size:11.5px;color:#2a2a2a;white-space:nowrap;width:65.40px;transform:scaleX(0.9388);transform-origin:0 50%;">Trace Issues</div>
<svg style="left:341px;top:651px;" width="8" height="3" viewBox="0 0 8 3"><rect x="0.5" y="0.1" width="1.5" height="1.9" fill="#5c5c5c"/><rect x="3" y="0.1" width="1.5" height="1.9" fill="#5c5c5c"/><rect x="5.5" y="0.1" width="1.5" height="1.9" fill="#5c5c5c"/></svg>
<svg style="left:341px;top:673px;" width="8" height="3" viewBox="0 0 8 3"><rect x="0.5" y="0.1" width="1.5" height="1.9" fill="#5c5c5c"/><rect x="3" y="0.1" width="1.5" height="1.9" fill="#5c5c5c"/><rect x="5.5" y="0.1" width="1.5" height="1.9" fill="#5c5c5c"/></svg>
<svg style="left:341px;top:695px;" width="8" height="3" viewBox="0 0 8 3"><rect x="0.5" y="0.1" width="1.5" height="1.9" fill="#5c5c5c"/><rect x="3" y="0.1" width="1.5" height="1.9" fill="#5c5c5c"/><rect x="5.5" y="0.1" width="1.5" height="1.9" fill="#5c5c5c"/></svg>
<svg style="left:341px;top:717px;" width="8" height="3" viewBox="0 0 8 3"><rect x="0.5" y="0.1" width="1.5" height="1.9" fill="#5c5c5c"/><rect x="3" y="0.1" width="1.5" height="1.9" fill="#5c5c5c"/><rect x="5.5" y="0.1" width="1.5" height="1.9" fill="#5c5c5c"/></svg>
<svg style="left:341px;top:739px;" width="8" height="3" viewBox="0 0 8 3"><rect x="0.5" y="0.1" width="1.5" height="1.9" fill="#5c5c5c"/><rect x="3" y="0.1" width="1.5" height="1.9" fill="#5c5c5c"/><rect x="5.5" y="0.1" width="1.5" height="1.9" fill="#5c5c5c"/></svg>
<svg style="left:341px;top:761px;" width="8" height="3" viewBox="0 0 8 3"><rect x="0.5" y="0.1" width="1.5" height="1.9" fill="#5c5c5c"/><rect x="3" y="0.1" width="1.5" height="1.9" fill="#5c5c5c"/><rect x="5.5" y="0.1" width="1.5" height="1.9" fill="#5c5c5c"/></svg>
<div style="left:7px;top:956px;width:1416px;height:1px;background:#bdbdbd;"></div>
<div style="left:7px;top:957px;width:1394px;height:22px;background:#e6e6e6;"></div>
<div style="left:1401px;top:957px;width:22px;height:22px;background:#fff;"></div>
<div style="left:361px;top:957px;width:1px;height:22px;background:#bdbdbd;"></div>
<div style="left:461px;top:957px;width:1px;height:22px;background:#bdbdbd;"></div>
<svg style="left:13px;top:962px;" width="11" height="12" viewBox="0 0 11 12"><rect x="0.8" y="0.8" width="1.6" height="10.4" fill="#8c8c8c"/><path d="M9.8 0.8 V11.2 L3 6 Z" fill="#8c8c8c"/></svg>
<div style="left:370.30px;top:959.00px;height:18px;line-height:18px;font-size:12px;color:#262626;white-space:nowrap;letter-spacing:-0.048px;">DIAGNOSTICS</div>
<div style="left:469.60px;top:959.00px;height:18px;line-height:18px;font-size:12px;color:#262626;white-space:nowrap;letter-spacing:-0.078px;">View diagnostics</div>
<svg style="left:1406px;top:962px;" width="13" height="12" viewBox="0 0 13 12"><rect x="0.6" y="1" width="11.8" height="1.8" fill="#8c8c8c"/><path d="M6.5 3.4 L12.4 10.4 H0.6 Z" fill="#8c8c8c"/></svg>
<div style="left:362px;top:128px;width:1061px;height:22px;background:#fff;"></div>
<div style="left:362px;top:150px;width:1061px;height:1px;background:#c8c8c8;"></div>
<div style="left:362px;top:128px;width:16px;height:23px;background:#fff;border-right:1px solid #b4b4b4;border-bottom:1px solid #b4b4b4;border-radius:0 0 3px 0;box-sizing:border-box;"></div>
<svg style="left:368px;top:135px;" width="4" height="7" viewBox="0 0 4 7"><path d="M0 0.5 H4 M0 2.5 H4 M0 4.5 H4 M0 6.5 H4" stroke="#8c8c8c" stroke-width="1"/></svg>
<div style="left:378px;top:128px;width:224px;height:3px;background:#2388dd;"></div>
<div style="left:378px;top:131px;width:225px;height:20px;background:#fff;border-right:1px solid #c8c8c8;box-sizing:border-box;"></div>
<div style="left:386.40px;top:132.00px;height:18px;line-height:18px;font-size:12px;color:#1a1a1a;white-space:nowrap;letter-spacing:-0.010px;">Model Testing - cc_DriverSwRequest</div>
<svg style="left:587px;top:135.5px;" width="11" height="11" viewBox="0 0 11 11"><path d="M1.2 1.2 L9.4 9.4 M9.4 1.2 L1.2 9.4" stroke="#4a4a4a" stroke-width="1"/></svg>
<svg style="left:1401px;top:134px;" width="2" height="10" viewBox="0 0 2 10"><rect x="0" y="0" width="2" height="2" fill="#686868"/><rect x="0" y="4" width="2" height="2" fill="#686868"/><rect x="0" y="8" width="2" height="2" fill="#686868"/></svg>
<div style="left:367px;top:158px;width:1051px;height:47px;background:#fff;border-radius:4px;"></div>
<svg style="left:374px;top:165px;" width="34" height="34" viewBox="0 0 34 34"><circle cx="17" cy="17" r="16" fill="#b52d2a"/><rect x="14.76" y="7.00" width="4.48" height="12.24" rx="0.64" fill="#fff"/><circle cx="17" cy="24.60" r="2.43" fill="#fff"/></svg>
<svg style="left:418px;top:169px;" width="27" height="27" viewBox="-1 -1 27 27"><rect x="0.55" y="0.55" width="17.9" height="17.9" rx="3.2" fill="#fff" stroke="#1f62c4" stroke-width="1.1"/><path d="M1.1 10.6 Q4.6 8.6 7.8 10.6 L13 15.2 V17.9 H3.8 Q1.1 17.9 1.1 15.2 Z" fill="#eaf3fd"/><path d="M0.8 9.1 H18.2" stroke="#5aa2ea" stroke-width="0.6"/><path d="M1 10.7 Q4.6 8.5 7.7 10.5 L12.6 14.9" fill="none" stroke="#2f8fe2" stroke-width="0.9"/>
<rect x="2.1" y="3.1" width="2.7" height="4.2" fill="#1653a8"/><rect x="6.1" y="5" width="2.7" height="2.3" fill="#2f96e6"/><rect x="10.2" y="2.2" width="2.7" height="5.1" fill="#1653a8"/><rect x="14.1" y="4" width="2.7" height="3.3" fill="#2f96e6"/>
<path d="M0.6 7.4 H18.4" stroke="#1653a8" stroke-width="1.2"/><g transform="translate(10.1,10.1) scale(0.9928571428571429)"><rect x="0.55" y="0.55" width="12.9" height="12.9" rx="1.7" fill="#fff" stroke="#555" stroke-width="1.1"/>
<path d="M2.4 1.9 L7.6 4.6 L2.4 7.3 Z" fill="#b4dafa" stroke="#2a78d4" stroke-width="0.9" stroke-linejoin="round"/>
<path d="M7.6 4.6 H9.9 V7" fill="none" stroke="#4a4a4a" stroke-width="0.9"/>
<rect x="7.4" y="7.2" width="4.6" height="4.6" rx="1.1" fill="#f8a8a8" stroke="#b81c1c" stroke-width="1.1"/></g></svg>
<div style="left:448.70px;top:167.80px;height:28px;line-height:28px;font-size:20px;color:#1a1a1a;white-space:nowrap;font-weight:bold;letter-spacing:-0.022px;">Model Testing - cc_DriverSwRequest</div>
<div style="left:1183.00px;top:164.80px;height:18px;line-height:18px;font-size:12px;color:#1a1a1a;white-space:nowrap;font-weight:bold;letter-spacing:-0.183px;">Updated by:</div>
<div style="left:1259.60px;top:164.80px;height:18px;line-height:18px;font-size:12px;color:#1a1a1a;white-space:nowrap;">a</div>
<div style="left:1183.00px;top:181.60px;height:18px;line-height:18px;font-size:12px;color:#1a1a1a;white-space:nowrap;font-weight:bold;letter-spacing:-0.097px;">Last updated:</div>
<div style="left:1269.50px;top:181.60px;height:18px;line-height:18px;font-size:12px;color:#1a1a1a;white-space:nowrap;letter-spacing:-0.052px;">12/10/2024, 5:37:27 PM</div>
<div style="left:371px;top:211px;width:1043px;height:347px;background:#f5f5f5;border:1px solid #c8c8c8;border-radius:3px;box-sizing:border-box;"></div>
<div style="left:382.30px;top:213.70px;height:21px;line-height:21px;font-size:13.7px;color:#1f1f1f;white-space:nowrap;width:103.81px;transform:scaleX(0.9412);transform-origin:0 50%;">TEST ANALYSIS</div>
<div style="left:378px;top:243px;width:335px;height:308px;background:#fff;border-radius:4px;"></div>
<div style="left:725px;top:243px;width:335px;height:308px;background:#fff;border-radius:4px;"></div>
<div style="left:1071px;top:242px;width:337px;height:310px;background:#fff;border-radius:4px;"></div>
<div style="left:388.40px;top:251.00px;height:22px;line-height:22px;font-size:15px;color:#1f1f1f;white-space:nowrap;letter-spacing:-0.027px;">Requirements Linked to Tests</div>
<svg style="left:389.4px;top:288.4px;" width="18" height="18" viewBox="0 0 18 18"><circle cx="9" cy="9" r="7.0" fill="#cafcc3" stroke="#3ba84a" stroke-width="1"/><path d="M4.73 8.93 L8.03 12.22 L13.12 6.97" fill="none" stroke="#0f8f22" stroke-width="1.05"/></svg>
<svg style="left:410.20000000000005px;top:290.0px" width="157.2" height="79.6" viewBox="410.20000000000005 290.0 157.2 79.6"><path d="M411.20000000000005 368.6 A77.6 77.6 0 0 1 566.4 368.6 L550.8 368.6 A62 62 0 0 0 426.8 368.6 Z" fill="#3cc431"/></svg>
<div style="left:459.20px;top:338.00px;height:30px;line-height:30px;font-size:23px;color:#1f1f1f;white-space:nowrap;font-weight:bold;letter-spacing:0.192px;">100%</div>
<div style="left:418.20px;top:370.00px;height:21px;line-height:21px;font-size:13.7px;color:#1f1f1f;white-space:nowrap;width:148.99px;transform:scaleX(0.9464);transform-origin:0 50%;">Requirements with Tests</div>
<div style="left:600px;top:304px;width:1px;height:70px;background:linear-gradient(to bottom,rgba(200,200,200,0),rgba(200,200,200,1) 35%,rgba(200,200,200,1) 65%,rgba(200,200,200,0));"></div>
<svg style="left:612.5px;top:288.4px;" width="18" height="18" viewBox="0 0 18 18"><circle cx="9" cy="9" r="7.0" fill="#cafcc3" stroke="#3ba84a" stroke-width="1"/><path d="M4.73 8.93 L8.03 12.22 L13.12 6.97" fill="none" stroke="#0f8f22" stroke-width="1.05"/></svg>
<div style="left:650.60px;top:318.60px;height:30px;line-height:30px;font-size:23px;color:#1f1f1f;white-space:nowrap;font-weight:bold;">0</div>
<div style="left:632.30px;top:350.10px;height:21px;line-height:21px;font-size:13.7px;color:#1f1f1f;white-space:nowrap;width:53.31px;transform:scaleX(0.9379);transform-origin:0 50%;">Unlinked</div>
<div style="left:394.50px;top:424.40px;height:21px;line-height:21px;font-size:13.7px;color:#1f1f1f;white-space:nowrap;width:137.82px;transform:scaleX(0.9469);transform-origin:0 50%;">Tests per Requirement</div>
<div style="left:615.08px;top:419.00px;height:16px;line-height:16px;font-size:11px;color:#1f1f1f;white-space:nowrap;">0</div>
<div style="left:624.7px;top:422px;width:49.0px;height:10.5px;border:1px solid #c8c8c8;box-sizing:border-box;background:#fff;"></div>
<div style="left:625.7px;top:423px;width:47.0px;height:8.5px;background:linear-gradient(to right,#b3deff 0%,#b3deff 20%,#80c9fa 20%,#80c9fa 40%,#4daef5 40%,#4daef5 60%,#2284d8 60%,#2284d8 80%,#1653a3 80%,#1653a3 100%);"></div>
<div style="left:677.20px;top:419.00px;height:16px;line-height:16px;font-size:11px;color:#1f1f1f;white-space:nowrap;">9</div>
<div style="left:615.00px;top:434.40px;height:16px;line-height:16px;font-size:11px;color:#1f1f1f;white-space:nowrap;letter-spacing:-0.043px;">Requirements</div>
<div style="left:399px;top:463px;width:51px;height:17px;background:#b3deff;"></div>
<div style="left:421.24px;top:478.40px;height:16px;line-height:16px;font-size:11px;color:#1f1f1f;white-space:nowrap;">0</div>
<div style="left:460px;top:463px;width:50px;height:17px;background:#1653a3;"></div>
<div style="left:473.79px;top:478.40px;height:16px;line-height:16px;font-size:11px;color:#1f1f1f;white-space:nowrap;">1 - 2</div>
<div style="left:520px;top:463px;width:51px;height:17px;background:#b3deff;"></div>
<div style="left:534.29px;top:478.40px;height:16px;line-height:16px;font-size:11px;color:#1f1f1f;white-space:nowrap;">3 - 4</div>
<div style="left:581px;top:463px;width:50px;height:17px;background:#b3deff;"></div>
<div style="left:594.79px;top:478.40px;height:16px;line-height:16px;font-size:11px;color:#1f1f1f;white-space:nowrap;">5 - 6</div>
<div style="left:641px;top:463px;width:51px;height:17px;background:#80c9fa;"></div>
<div style="left:660.03px;top:478.40px;height:16px;line-height:16px;font-size:11px;color:#1f1f1f;white-space:nowrap;">&gt;6</div>
<div style="left:404px;top:512px;width:104px;height:1px;background:#5a5a5a;"></div>
<div style="left:583px;top:512px;width:104px;height:1px;background:#5a5a5a;"></div>
<div style="left:528.00px;top:505.00px;height:16px;line-height:16px;font-size:11px;color:#5e5e5e;white-space:nowrap;letter-spacing:-0.112px;">TESTS</div>
<div style="left:735.60px;top:251.00px;height:22px;line-height:22px;font-size:15px;color:#1f1f1f;white-space:nowrap;letter-spacing:-0.030px;">Tests Linked to Requirements</div>
<svg style="left:736.5999999999999px;top:288.4px;" width="18" height="18" viewBox="0 0 18 18"><circle cx="9" cy="9" r="7.0" fill="#cafcc3" stroke="#3ba84a" stroke-width="1"/><path d="M4.73 8.93 L8.03 12.22 L13.12 6.97" fill="none" stroke="#0f8f22" stroke-width="1.05"/></svg>
<svg style="left:757.4px;top:290.0px" width="157.2" height="79.6" viewBox="757.4 290.0 157.2 79.6"><path d="M758.4 368.6 A77.6 77.6 0 0 1 913.6 368.6 L898.0 368.6 A62 62 0 0 0 774.0 368.6 Z" fill="#3cc431"/></svg>
<div style="left:806.40px;top:338.00px;height:30px;line-height:30px;font-size:23px;color:#1f1f1f;white-space:nowrap;font-weight:bold;letter-spacing:0.192px;">100%</div>
<div style="left:765.00px;top:370.00px;height:21px;line-height:21px;font-size:13.7px;color:#1f1f1f;white-space:nowrap;width:149.24px;transform:scaleX(0.9448);transform-origin:0 50%;">Tests with Requirements</div>
<div style="left:947.2px;top:304px;width:1.0px;height:70px;background:linear-gradient(to bottom,rgba(200,200,200,0),rgba(200,200,200,1) 35%,rgba(200,200,200,1) 65%,rgba(200,200,200,0));"></div>
<svg style="left:959.7px;top:288.4px;" width="18" height="18" viewBox="0 0 18 18"><circle cx="9" cy="9" r="7.0" fill="#cafcc3" stroke="#3ba84a" stroke-width="1"/><path d="M4.73 8.93 L8.03 12.22 L13.12 6.97" fill="none" stroke="#0f8f22" stroke-width="1.05"/></svg>
<div style="left:997.80px;top:318.60px;height:30px;line-height:30px;font-size:23px;color:#1f1f1f;white-space:nowrap;font-weight:bold;">0</div>
<div style="left:979.50px;top:350.10px;height:21px;line-height:21px;font-size:13.7px;color:#1f1f1f;white-space:nowrap;width:53.31px;transform:scaleX(0.9379);transform-origin:0 50%;">Unlinked</div>
<div style="left:741.40px;top:424.40px;height:21px;line-height:21px;font-size:13.7px;color:#1f1f1f;white-space:nowrap;width:137.58px;transform:scaleX(0.9457);transform-origin:0 50%;">Requirements per Test</div>
<div style="left:961.68px;top:419.00px;height:16px;line-height:16px;font-size:11px;color:#1f1f1f;white-space:nowrap;">0</div>
<div style="left:971.3000000000001px;top:422px;width:49.0px;height:10.5px;border:1px solid #c8c8c8;box-sizing:border-box;background:#fff;"></div>
<div style="left:972.3000000000001px;top:423px;width:47.0px;height:8.5px;background:linear-gradient(to right,#b3deff 0%,#b3deff 20%,#80c9fa 20%,#80c9fa 40%,#4daef5 40%,#4daef5 60%,#2284d8 60%,#2284d8 80%,#1653a3 80%,#1653a3 100%);"></div>
<div style="left:1023.80px;top:419.00px;height:16px;line-height:16px;font-size:11px;color:#1f1f1f;white-space:nowrap;">8</div>
<div style="left:983.00px;top:434.40px;height:16px;line-height:16px;font-size:11px;color:#1f1f1f;white-space:nowrap;letter-spacing:0.207px;">Tests</div>
<div style="left:746px;top:463px;width:51px;height:17px;background:#b3deff;"></div>
<div style="left:768.44px;top:478.40px;height:16px;line-height:16px;font-size:11px;color:#1f1f1f;white-space:nowrap;">0</div>
<div style="left:807px;top:463px;width:50px;height:17px;background:#80c9fa;"></div>
<div style="left:828.94px;top:478.40px;height:16px;line-height:16px;font-size:11px;color:#1f1f1f;white-space:nowrap;">1</div>
<div style="left:867px;top:463px;width:51px;height:17px;background:#b3deff;"></div>
<div style="left:889.44px;top:478.40px;height:16px;line-height:16px;font-size:11px;color:#1f1f1f;white-space:nowrap;">2</div>
<div style="left:928px;top:463px;width:50px;height:17px;background:#1653a3;"></div>
<div style="left:949.94px;top:478.40px;height:16px;line-height:16px;font-size:11px;color:#1f1f1f;white-space:nowrap;">3</div>
<div style="left:988px;top:463px;width:51px;height:17px;background:#b3deff;"></div>
<div style="left:1007.23px;top:478.40px;height:16px;line-height:16px;font-size:11px;color:#1f1f1f;white-space:nowrap;">&gt;3</div>
<div style="left:751px;top:512px;width:77px;height:1px;background:#5a5a5a;"></div>
<div style="left:957px;top:512px;width:77px;height:1px;background:#5a5a5a;"></div>
<div style="left:848.40px;top:505.00px;height:16px;line-height:16px;font-size:11px;color:#5e5e5e;white-space:nowrap;letter-spacing:-0.065px;">REQUIREMENTS</div>
<div style="left:1081.40px;top:249.80px;height:22px;line-height:22px;font-size:15px;color:#1f1f1f;white-space:nowrap;letter-spacing:-0.056px;">Test Breakdown</div>
<div style="left:1114.51px;top:292.50px;height:30px;line-height:30px;font-size:23px;color:#1f1f1f;white-space:nowrap;font-weight:bold;">10</div>
<div style="left:1094.00px;top:323.50px;height:21px;line-height:21px;font-size:13.7px;color:#1f1f1f;white-space:nowrap;width:70.83px;transform:scaleX(0.9459);transform-origin:0 50%;">Component</div>
<div style="left:1120.90px;top:377.60px;height:30px;line-height:30px;font-size:23px;color:#1f1f1f;white-space:nowrap;font-weight:bold;">0</div>
<div style="left:1091.30px;top:409.00px;height:21px;line-height:21px;font-size:13.7px;color:#1f1f1f;white-space:nowrap;width:76.19px;transform:scaleX(0.9503);transform-origin:0 50%;">Independent</div>
<div style="left:1201.00px;top:278.00px;height:21px;line-height:21px;font-size:13.7px;color:#1f1f1f;white-space:nowrap;width:126.15px;transform:scaleX(0.9433);transform-origin:0 50%;">Tests Cases by Type</div>
<div style="left:1200px;top:302px;width:191px;height:77px;background:#fff;border:1px solid #6e6e6e;box-sizing:border-box;"></div>
<div style="left:1295px;top:302px;width:1px;height:76px;background:#6e6e6e;"></div>
<div style="left:1204.60px;top:304.20px;height:16px;line-height:16px;font-size:11px;color:#1f1f1f;white-space:nowrap;">Type</div>
<div style="left:1299.40px;top:304.20px;height:16px;line-height:16px;font-size:11px;color:#1f1f1f;white-space:nowrap;">Test Cases</div>
<div style="left:1200px;top:321px;width:190px;height:1px;background:#6e6e6e;"></div>
<div style="left:1204.60px;top:323.20px;height:16px;line-height:16px;font-size:11px;color:#1f1f1f;white-space:nowrap;">Simulation</div>
<div style="left:1299.40px;top:323.20px;height:16px;line-height:16px;font-size:11px;color:#1f1f1f;white-space:nowrap;">10</div>
<div style="left:1200px;top:340px;width:190px;height:1px;background:#6e6e6e;"></div>
<div style="left:1204.60px;top:342.20px;height:16px;line-height:16px;font-size:11px;color:#1f1f1f;white-space:nowrap;">Equivalence</div>
<div style="left:1299.40px;top:342.20px;height:16px;line-height:16px;font-size:11px;color:#1f1f1f;white-space:nowrap;">0</div>
<div style="left:1200px;top:359px;width:190px;height:1px;background:#6e6e6e;"></div>
<div style="left:1204.60px;top:361.20px;height:16px;line-height:16px;font-size:11px;color:#1f1f1f;white-space:nowrap;">Baseline</div>
<div style="left:1299.40px;top:361.20px;height:16px;line-height:16px;font-size:11px;color:#1f1f1f;white-space:nowrap;">0</div>
<div style="left:1201.00px;top:408.10px;height:21px;line-height:21px;font-size:13.7px;color:#1f1f1f;white-space:nowrap;width:128.43px;transform:scaleX(0.9453);transform-origin:0 50%;">Tests Cases with Tag</div>
<div style="left:1200px;top:432px;width:191px;height:96px;background:#fff;border:1px solid #6e6e6e;box-sizing:border-box;"></div>
<div style="left:1295px;top:432px;width:1px;height:95px;background:#6e6e6e;"></div>
<div style="left:1204.60px;top:434.20px;height:16px;line-height:16px;font-size:11px;color:#1f1f1f;white-space:nowrap;">Tag</div>
<div style="left:1299.40px;top:434.20px;height:16px;line-height:16px;font-size:11px;color:#1f1f1f;white-space:nowrap;">Test Cases</div>
<div style="left:1200px;top:451px;width:190px;height:1px;background:#6e6e6e;"></div>
<div style="left:1204.60px;top:453.20px;height:16px;line-height:16px;font-size:11px;color:#1f1f1f;white-space:nowrap;">1_Draft</div>
<div style="left:1299.40px;top:453.20px;height:16px;line-height:16px;font-size:11px;color:#1f1f1f;white-space:nowrap;">3</div>
<div style="left:1200px;top:470px;width:190px;height:1px;background:#6e6e6e;"></div>
<div style="left:1204.60px;top:472.20px;height:16px;line-height:16px;font-size:11px;color:#1f1f1f;white-space:nowrap;">2_Under_review</div>
<div style="left:1299.40px;top:472.20px;height:16px;line-height:16px;font-size:11px;color:#1f1f1f;white-space:nowrap;">2</div>
<div style="left:1200px;top:489px;width:190px;height:1px;background:#6e6e6e;"></div>
<div style="left:1204.60px;top:491.20px;height:16px;line-height:16px;font-size:11px;color:#1f1f1f;white-space:nowrap;">3_Reviewed</div>
<div style="left:1299.40px;top:491.20px;height:16px;line-height:16px;font-size:11px;color:#1f1f1f;white-space:nowrap;">2</div>
<div style="left:1200px;top:508px;width:190px;height:1px;background:#6e6e6e;"></div>
<div style="left:1204.60px;top:510.20px;height:16px;line-height:16px;font-size:11px;color:#1f1f1f;white-space:nowrap;">4_Released</div>
<div style="left:1299.40px;top:510.20px;height:16px;line-height:16px;font-size:11px;color:#1f1f1f;white-space:nowrap;">3</div>
<div style="left:371px;top:568px;width:1043px;height:314px;background:#f5f5f5;border:1px solid #c8c8c8;border-radius:3px;box-sizing:border-box;"></div>
<div style="left:382.40px;top:570.40px;height:21px;line-height:21px;font-size:13.7px;color:#1f1f1f;white-space:nowrap;width:246.68px;transform:scaleX(0.9458);transform-origin:0 50%;">SIMULATION TEST RESULT ANALYSIS</div>
<div style="left:377px;top:599px;width:337px;height:277px;background:#fff;border-radius:4px;"></div>
<div style="left:724px;top:599px;width:424px;height:277px;background:#fff;border-radius:4px;"></div>
<div style="left:1158px;top:599px;width:250px;height:277px;background:#fff;border-radius:4px;"></div>
<div style="left:387.00px;top:607.00px;height:22px;line-height:22px;font-size:15px;color:#1f1f1f;white-space:nowrap;letter-spacing:-0.016px;">Model Test Status</div>
<svg style="left:387.8px;top:643.9px;" width="20" height="20" viewBox="0 0 20 20"><circle cx="10" cy="10" r="8" fill="#b52d2a"/><rect x="8.88" y="5.00" width="2.24" height="6.12" rx="0.32" fill="#fff"/><circle cx="10" cy="13.80" r="1.22" fill="#fff"/></svg>
<svg style="left:410.70000000000005px;top:646.9px" width="157.2" height="79.6" viewBox="410.70000000000005 646.9 157.2 79.6"><path d="M411.70000000000005 725.5 A77.6 77.6 0 0 1 566.9 725.5 L551.3 725.5 A62 62 0 0 0 427.3 725.5 Z" fill="#bfbfbf"/></svg>
<div style="left:472.60px;top:695.60px;height:30px;line-height:30px;font-size:23px;color:#1f1f1f;white-space:nowrap;font-weight:bold;letter-spacing:-0.442px;">0%</div>
<div style="left:467.60px;top:727.70px;height:21px;line-height:21px;font-size:13.7px;color:#1f1f1f;white-space:nowrap;width:45.70px;transform:scaleX(0.9498);transform-origin:0 50%;">Passed</div>
<div style="left:602px;top:660px;width:1px;height:70px;background:linear-gradient(to bottom,rgba(200,200,200,0),rgba(200,200,200,1) 35%,rgba(200,200,200,1) 65%,rgba(200,200,200,0));"></div>
<svg style="left:614.4px;top:644.6px;" width="18" height="18" viewBox="0 0 18 18"><circle cx="9" cy="9" r="7.0" fill="#cafcc3" stroke="#3ba84a" stroke-width="1"/><path d="M4.73 8.93 L8.03 12.22 L13.12 6.97" fill="none" stroke="#0f8f22" stroke-width="1.05"/></svg>
<div style="left:651.40px;top:675.00px;height:30px;line-height:30px;font-size:23px;color:#1f1f1f;white-space:nowrap;font-weight:bold;">0</div>
<div style="left:641.00px;top:706.10px;height:21px;line-height:21px;font-size:13.7px;color:#1f1f1f;white-space:nowrap;width:37.31px;transform:scaleX(0.9380);transform-origin:0 50%;">Failed</div>
<svg style="left:388.4px;top:764.4px;" width="18" height="18" viewBox="0 0 18 18"><circle cx="9" cy="9" r="7.0" fill="#cafcc3" stroke="#3ba84a" stroke-width="1"/><path d="M4.73 8.93 L8.03 12.22 L13.12 6.97" fill="none" stroke="#0f8f22" stroke-width="1.05"/></svg>
<svg style="left:500.7px;top:763.7px;" width="20" height="20" viewBox="0 0 20 20"><circle cx="10" cy="10" r="8" fill="#b52d2a"/><rect x="8.88" y="5.00" width="2.24" height="6.12" rx="0.32" fill="#fff"/><circle cx="10" cy="13.80" r="1.22" fill="#fff"/></svg>
<svg style="left:613.4px;top:764.4px;" width="18" height="18" viewBox="0 0 18 18"><circle cx="9" cy="9" r="7.0" fill="#cafcc3" stroke="#3ba84a" stroke-width="1"/><path d="M4.73 8.93 L8.03 12.22 L13.12 6.97" fill="none" stroke="#0f8f22" stroke-width="1.05"/></svg>
<div style="left:426.50px;top:795.00px;height:30px;line-height:30px;font-size:23px;color:#1f1f1f;white-space:nowrap;font-weight:bold;">0</div>
<div style="left:397.80px;top:826.10px;height:21px;line-height:21px;font-size:13.7px;color:#1f1f1f;white-space:nowrap;width:75.39px;transform:scaleX(0.9391);transform-origin:0 50%;">Inconclusive</div>
<div style="left:489px;top:780px;width:1px;height:70px;background:linear-gradient(to bottom,rgba(200,200,200,0),rgba(200,200,200,1) 35%,rgba(200,200,200,1) 65%,rgba(200,200,200,0));"></div>
<div style="left:532.71px;top:795.00px;height:30px;line-height:30px;font-size:23px;color:#1f1f1f;white-space:nowrap;font-weight:bold;">10</div>
<div style="left:519.70px;top:826.10px;height:21px;line-height:21px;font-size:13.7px;color:#1f1f1f;white-space:nowrap;width:54.83px;transform:scaleX(0.9392);transform-origin:0 50%;">Untested</div>
<div style="left:601px;top:780px;width:1px;height:70px;background:linear-gradient(to bottom,rgba(200,200,200,0),rgba(200,200,200,1) 35%,rgba(200,200,200,1) 65%,rgba(200,200,200,0));"></div>
<div style="left:651.40px;top:795.00px;height:30px;line-height:30px;font-size:23px;color:#1f1f1f;white-space:nowrap;font-weight:bold;">0</div>
<div style="left:632.70px;top:826.10px;height:21px;line-height:21px;font-size:13.7px;color:#1f1f1f;white-space:nowrap;width:53.31px;transform:scaleX(0.9342);transform-origin:0 50%;">Disabled</div>
<div style="left:734.40px;top:607.00px;height:22px;line-height:22px;font-size:15px;color:#1f1f1f;white-space:nowrap;letter-spacing:-0.028px;">Model Coverage</div>
<svg style="left:732.7px;top:635.3px;" width="20" height="20" viewBox="0 0 20 20"><circle cx="10" cy="10" r="8" fill="#b52d2a"/><rect x="8.88" y="5.00" width="2.24" height="6.12" rx="0.32" fill="#fff"/><circle cx="10" cy="13.80" r="1.22" fill="#fff"/></svg>
<div style="left:758.00px;top:636.50px;height:21px;line-height:21px;font-size:13.7px;color:#1f1f1f;white-space:nowrap;width:134.05px;transform:scaleX(0.9474);transform-origin:0 50%;">Aggregated Coverage</div>
<div style="left:935px;top:642.5px;width:10px;height:9.5px;background:#1653a3;"></div>
<div style="left:950.80px;top:639.40px;height:16px;line-height:16px;font-size:11px;color:#1f1f1f;white-space:nowrap;letter-spacing:-0.136px;">Achieved</div>
<div style="left:1006px;top:642.5px;width:10px;height:9.5px;background:#4db2f8;"></div>
<div style="left:1020.90px;top:639.40px;height:16px;line-height:16px;font-size:11px;color:#1f1f1f;white-space:nowrap;letter-spacing:-0.082px;">Justified</div>
<div style="left:1071px;top:642.5px;width:10px;height:9.5px;background:#b3deff;"></div>
<div style="left:1086.40px;top:639.40px;height:16px;line-height:16px;font-size:11px;color:#1f1f1f;white-space:nowrap;letter-spacing:-0.129px;">Missed</div>
<div style="left:739.67px;top:663.00px;height:16px;line-height:16px;font-size:11px;color:#1f1f1f;white-space:nowrap;">100%</div>
<div style="left:745.78px;top:730.90px;height:16px;line-height:16px;font-size:11px;color:#1f1f1f;white-space:nowrap;">50%</div>
<div style="left:751.90px;top:799.90px;height:16px;line-height:16px;font-size:11px;color:#1f1f1f;white-space:nowrap;">0%</div>
<div style="left:778.6px;top:671px;width:347.80000000000007px;height:1px;background:#e4e4e4;"></div>
<div style="left:778.6px;top:739px;width:347.80000000000007px;height:1px;background:#e4e4e4;"></div>
<div style="left:778.6px;top:808px;width:347.80000000000007px;height:1px;background:#c8c8c8;"></div>
<div style="left:789.83px;top:766.5px;width:45.53px;height:20px;line-height:20px;font-size:13px;color:#1f1f1f;white-space:nowrap;transform:rotate(-90deg);">No data</div>
<div style="left:859.53px;top:766.5px;width:45.53px;height:20px;line-height:20px;font-size:13px;color:#1f1f1f;white-space:nowrap;transform:rotate(-90deg);">No data</div>
<div style="left:929.13px;top:766.5px;width:45.53px;height:20px;line-height:20px;font-size:13px;color:#1f1f1f;white-space:nowrap;transform:rotate(-90deg);">No data</div>
<div style="left:998.83px;top:766.5px;width:45.53px;height:20px;line-height:20px;font-size:13px;color:#1f1f1f;white-space:nowrap;transform:rotate(-90deg);">No data</div>
<div style="left:1068.53px;top:766.5px;width:45.53px;height:20px;line-height:20px;font-size:13px;color:#1f1f1f;white-space:nowrap;transform:rotate(-90deg);">No data</div>
<div style="left:789.25px;top:815.70px;height:16px;line-height:16px;font-size:11px;color:#1f1f1f;white-space:nowrap;">Execution</div>
<div style="left:861.81px;top:815.70px;height:16px;line-height:16px;font-size:11px;color:#1f1f1f;white-space:nowrap;">Decision</div>
<div style="left:929.16px;top:815.70px;height:16px;line-height:16px;font-size:11px;color:#1f1f1f;white-space:nowrap;">Condition</div>
<div style="left:1003.87px;top:815.70px;height:16px;line-height:16px;font-size:11px;color:#1f1f1f;white-space:nowrap;">MC/DC</div>
<div style="left:1070.20px;top:815.70px;height:16px;line-height:16px;font-size:11px;color:#1f1f1f;white-space:nowrap;">Int.</div>
<div style="left:1070.20px;top:827.60px;height:16px;line-height:16px;font-size:11px;color:#1f1f1f;white-space:nowrap;">Overflow</div>
<svg style="left:806.7px;top:839.7px;" width="14" height="14" viewBox="0 0 14 14"><circle cx="7" cy="7" r="6" fill="#b52d2a"/><rect x="6.16" y="3.25" width="1.68" height="4.59" rx="0.24" fill="#fff"/><circle cx="7" cy="9.85" r="0.91" fill="#fff"/></svg>
<svg style="left:876.2px;top:839.7px;" width="14" height="14" viewBox="0 0 14 14"><circle cx="7" cy="7" r="6" fill="#b52d2a"/><rect x="6.16" y="3.25" width="1.68" height="4.59" rx="0.24" fill="#fff"/><circle cx="7" cy="9.85" r="0.91" fill="#fff"/></svg>
<svg style="left:945.8px;top:839.7px;" width="14" height="14" viewBox="0 0 14 14"><circle cx="7" cy="7" r="6" fill="#b52d2a"/><rect x="6.16" y="3.25" width="1.68" height="4.59" rx="0.24" fill="#fff"/><circle cx="7" cy="9.85" r="0.91" fill="#fff"/></svg>
<svg style="left:1015.4px;top:839.7px;" width="14" height="14" viewBox="0 0 14 14"><circle cx="7" cy="7" r="6" fill="#b52d2a"/><rect x="6.16" y="3.25" width="1.68" height="4.59" rx="0.24" fill="#fff"/><circle cx="7" cy="9.85" r="0.91" fill="#fff"/></svg>
<svg style="left:1085px;top:839.7px;" width="14" height="14" viewBox="0 0 14 14"><circle cx="7" cy="7" r="6" fill="#b52d2a"/><rect x="6.16" y="3.25" width="1.68" height="4.59" rx="0.24" fill="#fff"/><circle cx="7" cy="9.85" r="0.91" fill="#fff"/></svg>
<div style="left:1168.20px;top:607.20px;height:22px;line-height:22px;font-size:15px;color:#1f1f1f;white-space:nowrap;letter-spacing:-0.027px;">Achieved Coverage Ratio</div>
<div style="left:1174.30px;top:634.40px;height:21px;line-height:21px;font-size:13.7px;color:#1f1f1f;white-space:nowrap;width:164.23px;transform:scaleX(0.9444);transform-origin:0 50%;">Requirements-Based Tests</div>
<div style="left:1174px;top:658px;width:218px;height:77px;background:#fff;border:1px solid #6e6e6e;box-sizing:border-box;"></div>
<div style="left:1263px;top:658px;width:1px;height:76px;background:#6e6e6e;"></div>
<div style="left:1178.60px;top:660.20px;height:16px;line-height:16px;font-size:10.67px;color:#1f1f1f;white-space:nowrap;">Execution</div>
<svg style="left:1266px;top:661.5px;" width="13" height="13" viewBox="0 0 13 13"><circle cx="6.5" cy="6.5" r="6" fill="#b52d2a"/><rect x="5.66" y="2.75" width="1.68" height="4.59" rx="0.24" fill="#fff"/><circle cx="6.5" cy="9.35" r="0.91" fill="#fff"/></svg>
<div style="left:1284.40px;top:660.20px;height:16px;line-height:16px;font-size:10.67px;color:#1f1f1f;white-space:nowrap;">No data</div>
<div style="left:1174px;top:677px;width:217px;height:1px;background:#6e6e6e;"></div>
<div style="left:1178.60px;top:679.20px;height:16px;line-height:16px;font-size:10.67px;color:#1f1f1f;white-space:nowrap;">Decision</div>
<svg style="left:1266px;top:680.5px;" width="13" height="13" viewBox="0 0 13 13"><circle cx="6.5" cy="6.5" r="6" fill="#b52d2a"/><rect x="5.66" y="2.75" width="1.68" height="4.59" rx="0.24" fill="#fff"/><circle cx="6.5" cy="9.35" r="0.91" fill="#fff"/></svg>
<div style="left:1284.40px;top:679.20px;height:16px;line-height:16px;font-size:10.67px;color:#1f1f1f;white-space:nowrap;">No data</div>
<div style="left:1174px;top:696px;width:217px;height:1px;background:#6e6e6e;"></div>
<div style="left:1178.60px;top:698.20px;height:16px;line-height:16px;font-size:10.67px;color:#1f1f1f;white-space:nowrap;">Condition</div>
<svg style="left:1266px;top:699.5px;" width="13" height="13" viewBox="0 0 13 13"><circle cx="6.5" cy="6.5" r="6" fill="#b52d2a"/><rect x="5.66" y="2.75" width="1.68" height="4.59" rx="0.24" fill="#fff"/><circle cx="6.5" cy="9.35" r="0.91" fill="#fff"/></svg>
<div style="left:1284.40px;top:698.20px;height:16px;line-height:16px;font-size:10.67px;color:#1f1f1f;white-space:nowrap;">No data</div>
<div style="left:1174px;top:715px;width:217px;height:1px;background:#6e6e6e;"></div>
<div style="left:1178.60px;top:717.20px;height:16px;line-height:16px;font-size:10.67px;color:#1f1f1f;white-space:nowrap;">MC/DC</div>
<svg style="left:1266px;top:718.5px;" width="13" height="13" viewBox="0 0 13 13"><circle cx="6.5" cy="6.5" r="6" fill="#b52d2a"/><rect x="5.66" y="2.75" width="1.68" height="4.59" rx="0.24" fill="#fff"/><circle cx="6.5" cy="9.35" r="0.91" fill="#fff"/></svg>
<div style="left:1284.40px;top:717.20px;height:16px;line-height:16px;font-size:10.67px;color:#1f1f1f;white-space:nowrap;">No data</div>
<div style="left:1174.30px;top:759.10px;height:21px;line-height:21px;font-size:13.7px;color:#1f1f1f;white-space:nowrap;width:123.11px;transform:scaleX(0.9415);transform-origin:0 50%;">Unit-Boundary Tests</div>
<div style="left:1174px;top:783px;width:218px;height:77px;background:#fff;border:1px solid #6e6e6e;box-sizing:border-box;"></div>
<div style="left:1263px;top:783px;width:1px;height:76px;background:#6e6e6e;"></div>
<div style="left:1178.60px;top:785.20px;height:16px;line-height:16px;font-size:10.67px;color:#1f1f1f;white-space:nowrap;">Execution</div>
<div style="left:1284.40px;top:785.20px;height:16px;line-height:16px;font-size:10.67px;color:#1f1f1f;white-space:nowrap;">No data</div>
<div style="left:1174px;top:802px;width:217px;height:1px;background:#6e6e6e;"></div>
<div style="left:1178.60px;top:804.20px;height:16px;line-height:16px;font-size:10.67px;color:#1f1f1f;white-space:nowrap;">Decision</div>
<div style="left:1284.40px;top:804.20px;height:16px;line-height:16px;font-size:10.67px;color:#1f1f1f;white-space:nowrap;">No data</div>
<div style="left:1174px;top:821px;width:217px;height:1px;background:#6e6e6e;"></div>
<div style="left:1178.60px;top:823.20px;height:16px;line-height:16px;font-size:10.67px;color:#1f1f1f;white-space:nowrap;">Condition</div>
<div style="left:1284.40px;top:823.20px;height:16px;line-height:16px;font-size:10.67px;color:#1f1f1f;white-space:nowrap;">No data</div>
<div style="left:1174px;top:840px;width:217px;height:1px;background:#6e6e6e;"></div>
<div style="left:1178.60px;top:842.20px;height:16px;line-height:16px;font-size:10.67px;color:#1f1f1f;white-space:nowrap;">MC/DC</div>
<div style="left:1284.40px;top:842.20px;height:16px;line-height:16px;font-size:10.67px;color:#1f1f1f;white-space:nowrap;">No data</div>
</div></body></html>
